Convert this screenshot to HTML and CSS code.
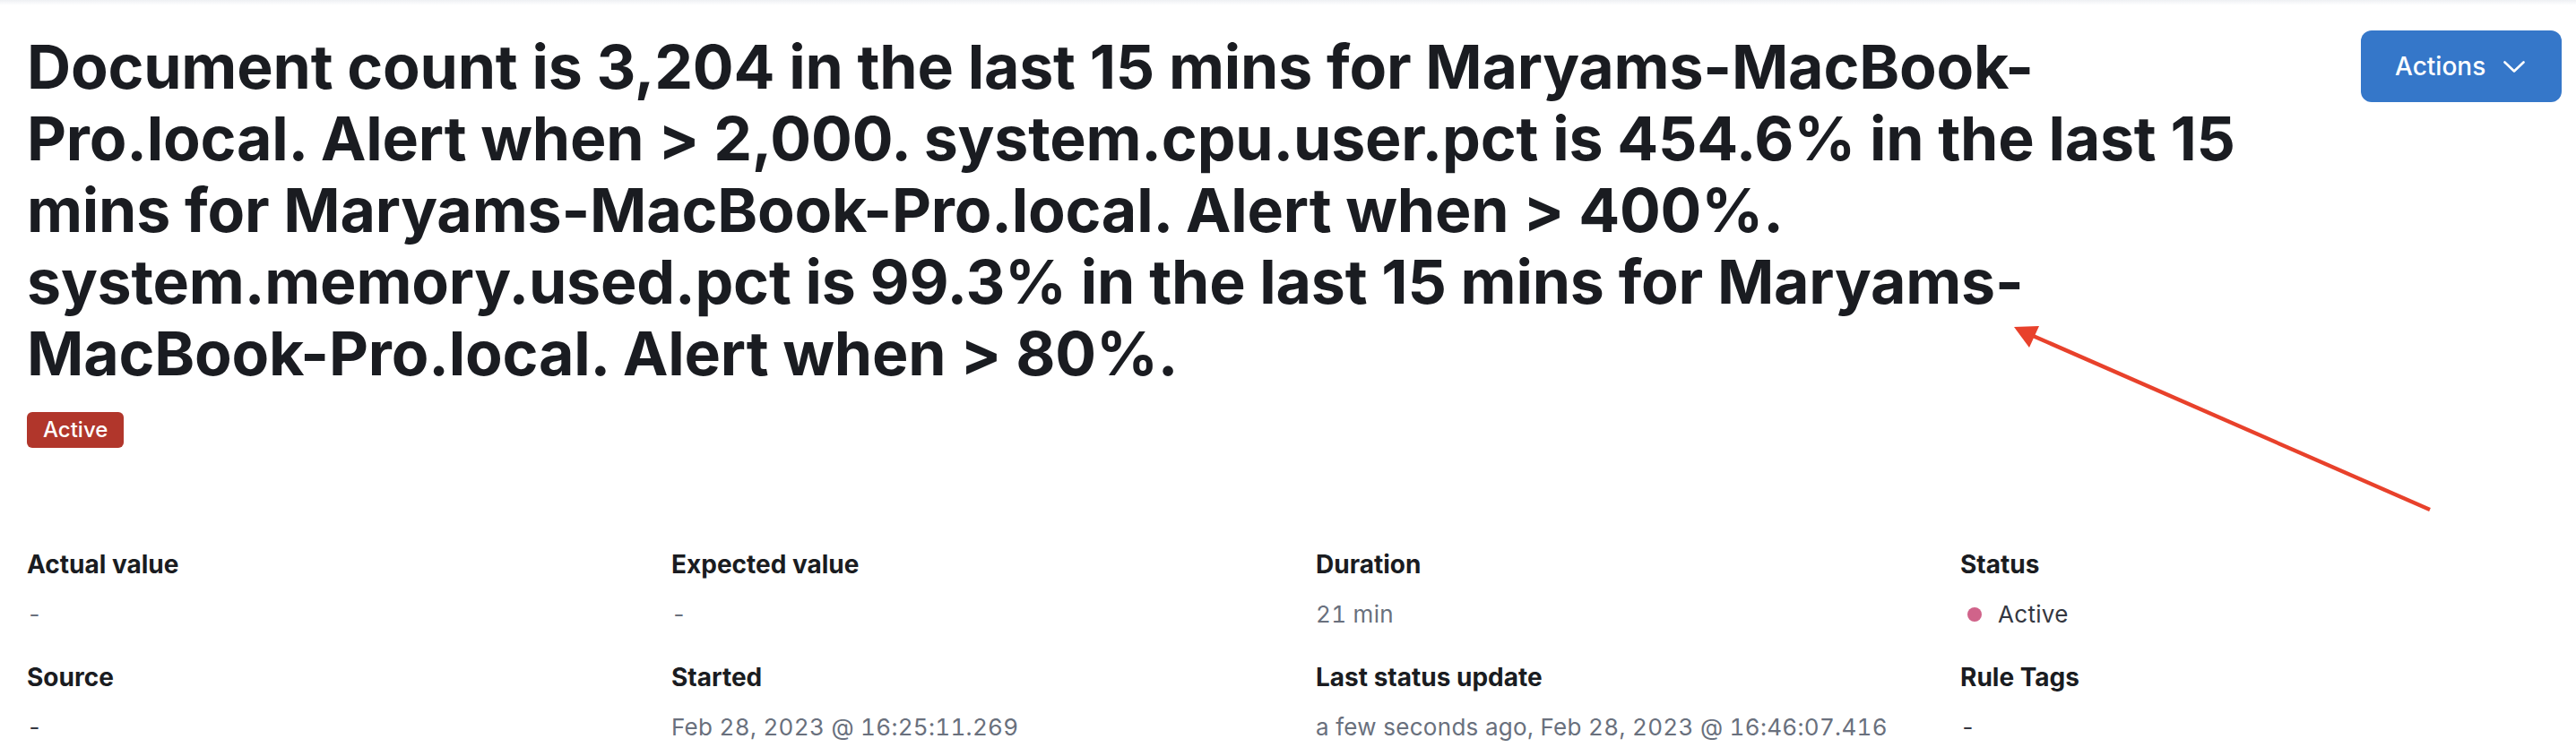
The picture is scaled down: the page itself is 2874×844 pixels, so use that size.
FILE: index.html
```html
<!DOCTYPE html>
<html lang="en">
<head>
<meta charset="utf-8">
<title>Alert details</title>
<link rel="stylesheet" href="styles.css">
</head>
<body>
<div class="topshade"></div>
<main class="page">
  <header class="header">
    <div class="title-block">
      <h1 class="title">Document count is 3,204 in the last 15 mins for Maryams-MacBook-Pro.local. Alert when &gt; 2,000. system.cpu.user.pct is 454.6% in the last 15 mins for Maryams-MacBook-Pro.local. Alert when &gt; 400%. system.memory.used.pct is 99.3% in the last 15 mins for Maryams-MacBook-Pro.local. Alert when &gt; 80%.</h1>
      <span class="badge">Active</span>
    </div>
    <button class="btn" type="button">
      <span>Actions</span>
      <svg class="chev" width="24" height="13" viewBox="0 0 24 13" aria-hidden="true"><path d="M1.5 1.5 L12 11.5 L22.5 1.5" fill="none" stroke="#fff" stroke-width="2.6" stroke-linecap="round" stroke-linejoin="round"/></svg>
    </button>
  </header>

  <section class="details">
    <div class="item">
      <div class="label">Actual value</div>
      <div class="value">-</div>
    </div>
    <div class="item">
      <div class="label">Expected value</div>
      <div class="value">-</div>
    </div>
    <div class="item">
      <div class="label">Duration</div>
      <div class="value">21 min</div>
    </div>
    <div class="item">
      <div class="label">Status</div>
      <div class="value health"><span class="dot"></span><span class="health-text">Active</span></div>
    </div>
    <div class="item">
      <div class="label">Source</div>
      <div class="value dark">-</div>
    </div>
    <div class="item">
      <div class="label">Started</div>
      <div class="value">Feb 28, 2023 @ 16:25:11.269</div>
    </div>
    <div class="item">
      <div class="label">Last status update</div>
      <div class="value">a few seconds ago, Feb 28, 2023 @ 16:46:07.416</div>
    </div>
    <div class="item">
      <div class="label">Rule Tags</div>
      <div class="value dark">-</div>
    </div>
  </section>
</main>

<svg class="annotation" width="2874" height="844" viewBox="0 0 2874 844" aria-hidden="true">
  <line x1="2711" y1="569" x2="2266" y2="374" stroke="#E8412B" stroke-width="4.4"/>
  <polygon points="2247,365 2275,364 2264,388" fill="#E8412B"/>
</svg>
</body>
</html>
```

FILE: styles.css
```css
* { box-sizing: border-box; }

html, body {
  margin: 0;
  padding: 0;
  background: #ffffff;
}

body {
  font-family: Inter, "Noto Sans", "Liberation Sans", sans-serif;
  color: #1a1c21;
  width: 2874px;
  height: 844px;
  overflow: hidden;
  position: relative;
}

.topshade {
  height: 6px;
  background: linear-gradient(to bottom, #eef0f3 0%, #f7f8fa 50%, #ffffff 100%);
}

.page {
  padding: 28px 16px 0 30px;
}

.header {
  display: flex;
  justify-content: space-between;
  align-items: flex-start;
  gap: 64px;
}

.title-block {
  flex: 1 1 auto;
  max-width: 2545px;
}

.title {
  margin: 0;
  font-size: 68px;
  line-height: 80px;
  font-weight: 700;
  color: #1a1c21;
  letter-spacing: -0.2px;
}

.badge {
  display: inline-block;
  margin-top: 26px;
  height: 40px;
  line-height: 40px;
  padding: 0 18px;
  background: #b1362b;
  color: #ffffff;
  font-size: 24px;
  font-weight: 500;
  border-radius: 6px;
}

.btn {
  flex: 0 0 auto;
  display: flex;
  align-items: center;
  gap: 20px;
  height: 80px;
  width: 224px;
  padding: 0 38px;
  border: 0;
  border-radius: 12px;
  background: #3577c9;
  color: #ffffff;
  font-family: inherit;
  font-size: 28px;
  font-weight: 500;
  cursor: pointer;
}

.chev { display: block; }

.details {
  display: grid;
  grid-template-columns: repeat(4, 671px);
  column-gap: 48px;
  row-gap: 34px;
  margin-top: 110px;
}

.label {
  font-size: 28px;
  line-height: 40px;
  font-weight: 700;
  color: #1a1c21;
}

.value {
  margin-top: 20px;
  font-size: 26px;
  line-height: 32px;
  letter-spacing: 0.3px;
  font-variant-numeric: tabular-nums;
  color: #69707d;
}

.value.dark { color: #343741; }

.health {
  display: flex;
  align-items: center;
  gap: 18px;
  padding-left: 8px;
}

.dot {
  width: 16px;
  height: 16px;
  border-radius: 50%;
  background: #d0638a;
}

.health-text { color: #343741; }

.annotation {
  position: absolute;
  left: 0;
  top: 0;
  pointer-events: none;
}
```
